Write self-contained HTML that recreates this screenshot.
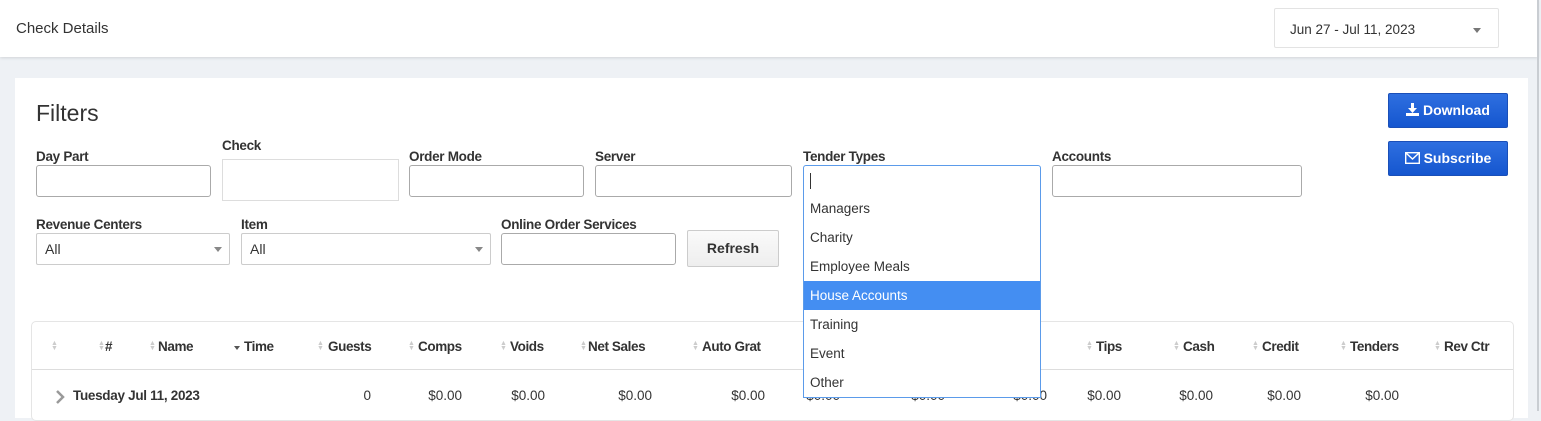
<!DOCTYPE html>
<html><head><style>
*{box-sizing:border-box;margin:0;padding:0}
body{width:1541px;height:411px;overflow:hidden;background:#eef1f5;font-family:"Liberation Sans",sans-serif;color:#333;position:relative;font-size:14px}
.a{position:absolute}
.hdr{left:0;top:0;width:1538px;height:57px;background:#fff;box-shadow:0 1px 3px rgba(0,0,0,.12)}
.vline{left:1537px;top:0;width:2px;height:411px;background:#c9cdd2}
.card{left:15px;top:78px;width:1513px;height:340px;background:#fff}
.lbl{font-size:13.5px;font-weight:bold;color:#333;letter-spacing:-.3px}
.in{border:1px solid #aaa;border-radius:3px;background:#fff;height:32px}
.sel{border:1px solid #ccc;border-radius:2px;background:#fff;height:32px;padding:7px 8px;font-size:14px}
.sel:after{content:"";position:absolute;right:7px;top:13px;border:4px solid transparent;border-top:5px solid #888}
.btn{background:linear-gradient(#2e6fe0,#1556cf);border:1px solid #1a4fb8;border-radius:2px;color:#fff;font-weight:bold;font-size:14px;text-align:center;line-height:33px;width:120px;height:35px}
.th{font-weight:bold;font-size:13.5px;top:339px;letter-spacing:-.4px}
.si{position:absolute;font-size:7px;color:#ccc;top:341px;line-height:5px}
.td{top:388px;font-size:13.5px;text-align:right}
.dd div{height:29px;line-height:29px;padding-left:6px;font-size:13.5px}
</style></head><body>
<div class="a hdr"></div>
<div class="a" style="left:16px;top:20px;font-size:15px">Check Details</div>
<div class="a" style="left:1274px;top:8px;width:225px;height:40px;border:1px solid #e3e3e3;border-radius:2px;background:#fff"></div>
<div class="a" style="left:1290px;top:22px;font-size:13.5px">Jun 27 - Jul 11, 2023</div>
<div class="a" style="left:1473px;top:28px;border:4px solid transparent;border-top:5px solid #777"></div>
<div class="a vline"></div>
<div class="a card"></div>
<div class="a" style="left:36px;top:100px;font-size:23px;color:#333">Filters</div>
<div class="a btn" style="left:1388px;top:93px"><svg width="13" height="13" viewBox="0 0 13 13" style="vertical-align:-1px"><path d="M5 0h3v5h3l-4.5 5L2 5h3z M0 10h13v3H0z" fill="#fff"/></svg> Download</div>
<div class="a btn" style="left:1388px;top:141px"><svg width="15" height="12" viewBox="0 0 15 12" style="vertical-align:-1px"><rect x=".7" y=".7" width="13.6" height="10.6" fill="none" stroke="#fff" stroke-width="1.4"/><path d="M1 1l6.5 6L14 1" fill="none" stroke="#fff" stroke-width="1.4"/></svg> Subscribe</div>

<div class="a lbl" style="left:36px;top:149px">Day Part</div>
<div class="a in" style="left:36px;top:165px;width:175px"></div>
<div class="a lbl" style="left:222px;top:138px">Check</div>
<div class="a" style="left:222px;top:159px;width:177px;height:42px;border:1px solid #ddd"></div>
<div class="a lbl" style="left:409px;top:149px">Order Mode</div>
<div class="a in" style="left:409px;top:165px;width:175px"></div>
<div class="a lbl" style="left:595px;top:149px">Server</div>
<div class="a in" style="left:595px;top:165px;width:197px"></div>
<div class="a lbl" style="left:803px;top:149px">Tender Types</div>
<div class="a lbl" style="left:1052px;top:149px">Accounts</div>
<div class="a in" style="left:1052px;top:165px;width:250px"></div>

<div class="a lbl" style="left:36px;top:217px">Revenue Centers</div>
<div class="a sel" style="left:36px;top:233px;width:194px">All</div>
<div class="a lbl" style="left:241px;top:217px">Item</div>
<div class="a sel" style="left:241px;top:233px;width:250px">All</div>
<div class="a lbl" style="left:501px;top:217px">Online Order Services</div>
<div class="a in" style="left:501px;top:233px;width:175px"></div>
<div class="a" style="left:687px;top:230px;width:92px;height:37px;border:1px solid #ccc;border-radius:2px;background:linear-gradient(#fafafa,#eee);font-weight:bold;text-align:center;line-height:35px">Refresh</div>

<div class="a" style="left:31px;top:321px;width:1483px;height:100px;border:1px solid #e5e5e5;border-radius:5px;background:#fff"></div>
<div class="a" style="left:32px;top:369px;width:1481px;height:1px;background:#ddd"></div>
<div class="a si" style="left:51px">▲<br>▼</div>
<div class="a si" style="left:98px">▲<br>▼</div><div class="a th" style="left:105px">#</div>
<div class="a si" style="left:149px">▲<br>▼</div><div class="a th" style="left:158px">Name</div>
<div class="a" style="left:234px;top:346px;border:3px solid transparent;border-top:4px solid #555"></div><div class="a th" style="left:244px">Time</div>
<div class="a si" style="left:317px">▲<br>▼</div><div class="a th" style="left:328px">Guests</div>
<div class="a si" style="left:408px">▲<br>▼</div><div class="a th" style="left:418px">Comps</div>
<div class="a si" style="left:500px">▲<br>▼</div><div class="a th" style="left:510px">Voids</div>
<div class="a si" style="left:580px">▲<br>▼</div><div class="a th" style="left:588px">Net Sales</div>
<div class="a si" style="left:692px">▲<br>▼</div><div class="a th" style="left:702px">Auto Grat</div>
<div class="a th" style="left:1012px">Net</div>
<div class="a si" style="left:1086px">▲<br>▼</div><div class="a th" style="left:1096px">Tips</div>
<div class="a si" style="left:1173px">▲<br>▼</div><div class="a th" style="left:1183px">Cash</div>
<div class="a si" style="left:1252px">▲<br>▼</div><div class="a th" style="left:1262px">Credit</div>
<div class="a si" style="left:1340px">▲<br>▼</div><div class="a th" style="left:1350px">Tenders</div>
<div class="a si" style="left:1434px">▲<br>▼</div><div class="a th" style="left:1444px">Rev Ctr</div>

<svg class="a" style="left:55px;top:389px" width="10" height="16" viewBox="0 0 10 16"><path d="M2 2l6 6-6 6" fill="none" stroke="#999" stroke-width="2.5"/></svg>
<div class="a" style="left:73px;top:388px;font-weight:bold;font-size:13.5px;letter-spacing:-.3px">Tuesday Jul 11, 2023</div>
<div class="a td" style="left:330px;width:41px">0</div>
<div class="a td" style="left:400px;width:62px">$0.00</div>
<div class="a td" style="left:483px;width:62px">$0.00</div>
<div class="a td" style="left:590px;width:62px">$0.00</div>
<div class="a td" style="left:703px;width:62px">$0.00</div>
<div class="a td" style="left:778px;width:62px">$0.00</div>
<div class="a td" style="left:883px;width:62px">$0.00</div>
<div class="a td" style="left:985px;width:62px">$0.00</div>
<div class="a td" style="left:1059px;width:62px">$0.00</div>
<div class="a td" style="left:1151px;width:62px">$0.00</div>
<div class="a td" style="left:1239px;width:62px">$0.00</div>
<div class="a td" style="left:1337px;width:62px">$0.00</div>

<div class="a" style="left:803px;top:165px;width:238px;height:32px;border:1px solid #5b9bea;border-radius:3px 3px 0 0;background:#fff"></div>
<div class="a" style="left:810px;top:173px;width:1px;height:16px;background:#333"></div>
<div class="a dd" style="left:803px;top:194px;width:238px;height:204px;border:1px solid #5b9bea;border-top:none;background:#fff">
<div>Managers</div><div>Charity</div><div>Employee Meals</div><div style="background:#448ef2;color:#fff">House Accounts</div><div>Training</div><div>Event</div><div>Other</div>
</div>
</body></html>
